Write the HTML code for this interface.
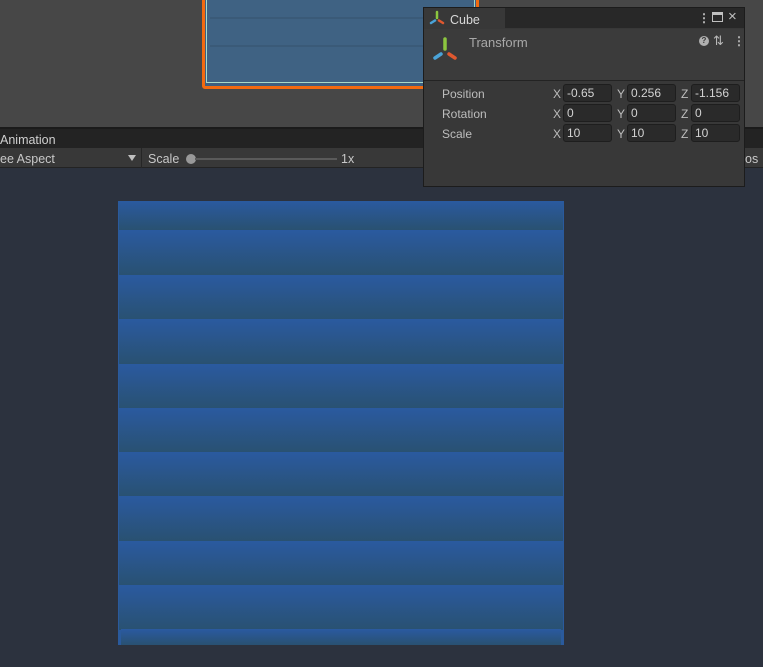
<!DOCTYPE html>
<html><head><style>
*{margin:0;padding:0;box-sizing:border-box}
body{width:763px;height:667px;overflow:hidden;background:#2c323e;font-family:"Liberation Sans",sans-serif;position:relative;font-size:12px;color:#c4c4c4}
.a{position:absolute}
.band{position:absolute;left:119px;width:444px;height:45px;background:linear-gradient(#2a5aa0,#295171)}
.f{position:absolute;height:18px;background:#2a2a2a;border:1px solid #1e1e1e;border-radius:3px;color:#d2d2d2;font-size:12px;padding-left:3px;line-height:17px}
.l{position:absolute;font-size:12px;color:#bdbdbd}
</style></head><body>
<div class="a" style="left:0;top:0;width:763px;height:127px;background:#474747"></div>
<div class="a" style="left:202px;top:-4px;width:277px;height:93px;border:3px solid #f26a10;border-radius:3px;background:#3e5f80"></div>
<div class="a" style="left:206px;top:0;width:269px;height:83px;border:1px solid #a8d8c8;border-top:none;background:#3f6283"></div>
<div class="a" style="left:210px;top:17px;width:260px;height:2px;background:#3a5a78"></div>
<div class="a" style="left:210px;top:45px;width:260px;height:2px;background:#3a5a78"></div>
<div class="a" style="left:0;top:127px;width:763px;height:2px;background:#1b1b1b"></div>
<div class="a" style="left:0;top:129px;width:763px;height:19px;background:#232323"></div>
<div class="a" style="left:0;top:133px;font-size:12.5px;color:#d0d0d0">Animation</div>
<div class="a" style="left:0;top:148px;width:763px;height:20px;background:#383838;border-bottom:1px solid #232323"></div>
<div class="a" style="left:0;top:152px;font-size:12.5px;color:#c8c8c8">ee Aspect</div>
<div class="a" style="left:128px;top:155px;width:0;height:0;border-left:4px solid transparent;border-right:4px solid transparent;border-top:6px solid #c0c0c0"></div>
<div class="a" style="left:141px;top:148px;width:1px;height:20px;background:#262626"></div>
<div class="a" style="left:148px;top:152px;font-size:12.5px;color:#c8c8c8">Scale</div>
<div class="a" style="left:186px;top:154px;width:10px;height:10px;border-radius:50%;background:#999"></div>
<div class="a" style="left:195px;top:158px;width:142px;height:2px;background:#5a5a5a"></div>
<div class="a" style="left:341px;top:152px;font-size:12.5px;color:#c8c8c8">1x</div>
<div class="a" style="left:745px;top:152px;font-size:12.5px;color:#c8c8c8">os</div>

<div class="a" style="left:118px;top:201px;width:446px;height:444px;background:#2a5a9c"></div>
<div class="band" style="top:201px;height:29px"></div>
<div class="band" style="top:230px"></div>
<div class="band" style="top:275px"></div>
<div class="band" style="top:319px"></div>
<div class="band" style="top:364px"></div>
<div class="band" style="top:408px"></div>
<div class="band" style="top:452px"></div>
<div class="band" style="top:496px"></div>
<div class="band" style="top:541px"></div>
<div class="band" style="top:585px"></div>
<div class="band" style="top:629px;height:16px;left:121px;width:440px"></div>

<div class="a" style="left:423px;top:7px;width:322px;height:180px;background:#383838;border:1px solid #1c1c1c"></div>
<div class="a" style="left:424px;top:8px;width:320px;height:20px;background:#282828"></div>
<div class="a" style="left:424px;top:8px;width:81px;height:21px;background:#383838"></div>
<svg class="a" style="left:428px;top:10px" width="18" height="16"><path d="M9 2v6" stroke="#8cc63f" stroke-width="2.5" stroke-linecap="round"/><path d="M3 13l4-2.5" stroke="#4aa3d8" stroke-width="2.5" stroke-linecap="round"/><path d="M11 10.5l4 2.5" stroke="#e0582f" stroke-width="2.5" stroke-linecap="round"/></svg>
<div class="a" style="left:450px;top:13px;font-size:12.5px;color:#d8d8d8">Cube</div>
<div class="a" style="left:698px;top:11px;font-size:12px;color:#c0c0c0;font-weight:bold">⋮</div>
<div class="a" style="left:712px;top:12px;width:11px;height:10px;border:1.5px solid #c0c0c0;border-top-width:3px"></div>
<div class="a" style="left:728px;top:8px;font-size:15px;color:#c0c0c0">×</div>
<div class="a" style="left:424px;top:29px;width:320px;height:52px;background:#3b3b3b;border-bottom:1px solid #232323"></div>
<svg class="a" style="left:430px;top:35px" width="30" height="28"><path d="M15 4v10" stroke="#8cc63f" stroke-width="3.5" stroke-linecap="round"/><path d="M5 23l6-4" stroke="#4aa3d8" stroke-width="3.5" stroke-linecap="round"/><path d="M19 19l6 4" stroke="#e0582f" stroke-width="3.5" stroke-linecap="round"/></svg>
<div class="a" style="left:469px;top:35px;font-size:13px;color:#a8a8a8">Transform</div>
<div class="a" style="left:699px;top:36px;width:10px;height:10px;border-radius:50%;background:#b0b0b0;color:#383838;font-size:8px;font-weight:bold;text-align:center;line-height:10px">?</div>
<div class="a" style="left:713px;top:33px;font-size:13px;color:#b8b8b8">⇅</div>
<div class="a" style="left:733px;top:34px;font-size:12px;color:#b8b8b8;font-weight:bold">⋮</div>

<div class="l" style="left:442px;top:87px">Position</div>
<div class="l" style="left:442px;top:107px">Rotation</div>
<div class="l" style="left:442px;top:127px">Scale</div>
<div class="l" style="left:553px;top:87px">X</div><div class="l" style="left:617px;top:87px">Y</div><div class="l" style="left:681px;top:87px">Z</div>
<div class="l" style="left:553px;top:107px">X</div><div class="l" style="left:617px;top:107px">Y</div><div class="l" style="left:681px;top:107px">Z</div>
<div class="l" style="left:553px;top:127px">X</div><div class="l" style="left:617px;top:127px">Y</div><div class="l" style="left:681px;top:127px">Z</div>
<div class="f" style="left:563px;top:84px;width:49px">-0.65</div>
<div class="f" style="left:627px;top:84px;width:49px">0.256</div>
<div class="f" style="left:691px;top:84px;width:49px">-1.156</div>
<div class="f" style="left:563px;top:104px;width:49px">0</div>
<div class="f" style="left:627px;top:104px;width:49px">0</div>
<div class="f" style="left:691px;top:104px;width:49px">0</div>
<div class="f" style="left:563px;top:124px;width:49px">10</div>
<div class="f" style="left:627px;top:124px;width:49px">10</div>
<div class="f" style="left:691px;top:124px;width:49px">10</div>
</body></html>
